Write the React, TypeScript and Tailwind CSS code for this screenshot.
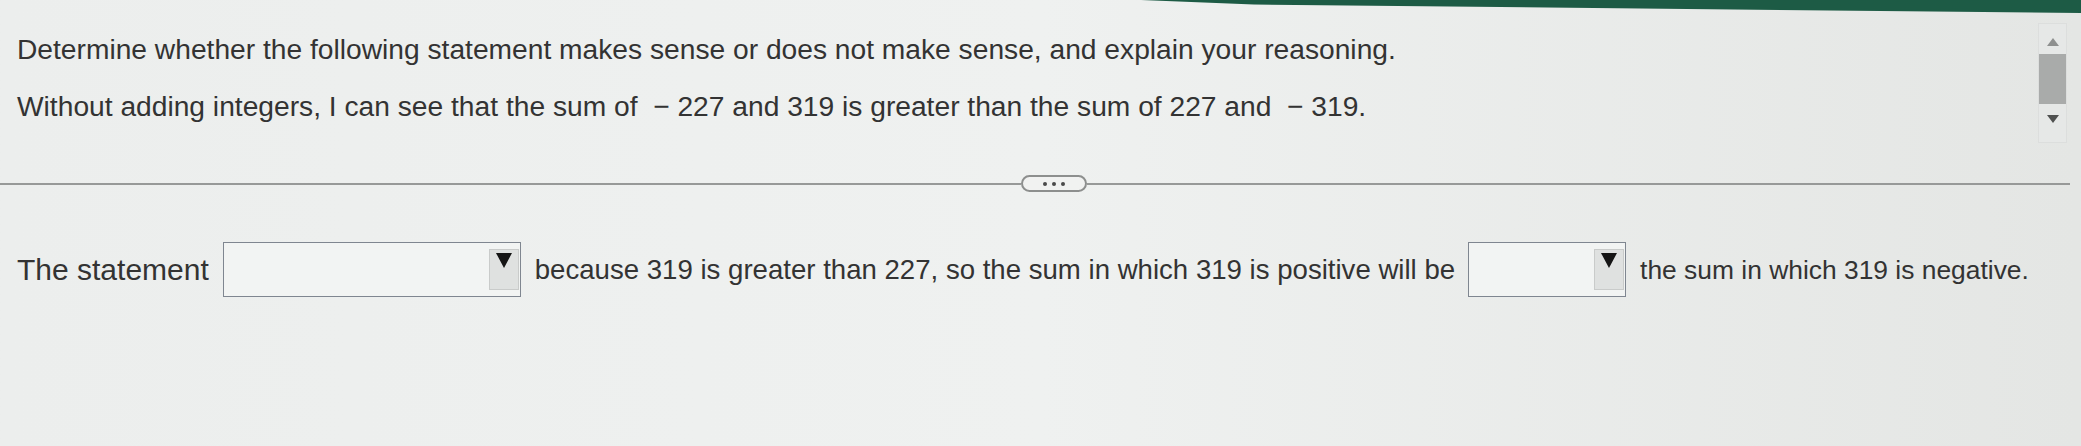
import React from "react";

function Dropdown({ width }: { width: string }) {
  return (
    <div
      className={`${width} flex h-[55px] shrink-0 items-stretch justify-end border border-[#7f8690] bg-[#f2f4f3] py-[6px] pr-[1px]`}
    >
      <div className="flex w-[30px] justify-center border border-[#c9cbca] bg-[#dfe1e0] pt-[3px]">
        <svg width="16" height="15" viewBox="0 0 16 15" aria-hidden>
          <path d="M0 0 H16 L8 15 Z" fill="#151515" />
        </svg>
      </div>
    </div>
  );
}

export default function App() {
  return (
    <div className="h-[446px] w-full overflow-hidden bg-gradient-to-r from-[#eceeed] via-[#eff1f0] to-[#e4e6e4] font-['Liberation_Sans',Arial,sans-serif] text-[#333333]">
      {/* header edge of the window */}
      <div className="flex h-[13px] justify-end">
        <div className="h-full w-[940px] bg-[#1d5b45] [clip-path:polygon(0_0,100%_0,100%_100%,12%_35%)]" />
      </div>

      <div className="flex">
        <div className="flex-1 pl-[17px] pt-[20px] text-[28.2px] leading-[32px]">
          <p>
            Determine whether the following statement makes sense or does not make sense, and explain your reasoning.
          </p>
          <p className="mt-[25px]">
            Without adding integers, I can see that the sum of &nbsp;− 227 and 319 is greater than the sum of 227 and &nbsp;− 319.
          </p>
        </div>

        {/* scrollbar */}
        <div className="mr-[14px] mt-[10px] flex h-[120px] w-[29px] flex-col items-center border border-[#dcdedd] bg-[#e6e8e7]">
          <svg width="12" height="8" viewBox="0 0 12 8" className="mt-[14px]" aria-hidden>
            <path d="M0 8 L6 0 L12 8 Z" fill="#8e908f" />
          </svg>
          <div className="mt-[8px] h-[50px] w-[27px] bg-[#a9abaa]" />
          <svg width="12" height="8" viewBox="0 0 12 8" className="mt-[11px]" aria-hidden>
            <path d="M0 0 H12 L6 8 Z" fill="#4f5150" />
          </svg>
        </div>
      </div>

      {/* divider with expand pill */}
      <div className="mt-[32px] flex items-center pr-[11px]">
        <div className="h-[2px] w-[1021px] bg-[#979998]" />
        <div className="flex h-[17px] w-[66px] items-center justify-center gap-[5px] rounded-full border-2 border-[#8d8f8e] bg-[#f1f2f1]">
          <span className="h-[4px] w-[4px] rounded-full bg-[#4a4a4a]" />
          <span className="h-[4px] w-[4px] rounded-full bg-[#4a4a4a]" />
          <span className="h-[4px] w-[4px] rounded-full bg-[#4a4a4a]" />
        </div>
        <div className="h-[2px] flex-1 bg-[#979998]" />
      </div>

      <div className="mt-[50px] flex items-center pl-[17px] leading-[32px]">
        <span className="whitespace-nowrap text-[30px]">The statement</span>
        <div className="ml-[14px]">
          <Dropdown width="w-[298px]" />
        </div>
        <span className="ml-[14px] whitespace-nowrap text-[27.6px]">
          because 319 is greater than 227, so the sum in which 319 is positive will be
        </span>
        <div className="ml-[13px]">
          <Dropdown width="w-[158px]" />
        </div>
        <span className="ml-[14px] whitespace-nowrap text-[26.4px]">the sum in which 319 is negative.</span>
      </div>
    </div>
  );
}
